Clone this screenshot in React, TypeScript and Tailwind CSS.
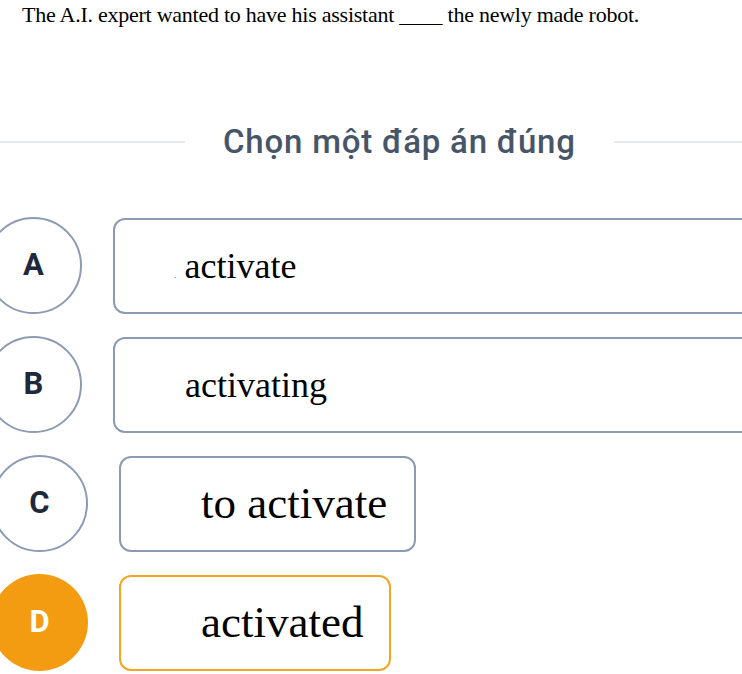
import React from "react";

type Opt = {
  key: string;
  text: string;
  selected?: boolean;
  shift: string;
  boxW: string;
  textCls: string;
  dot?: boolean;
};

const options: Opt[] = [
  { key: "A", text: "activate", shift: "ml-[-15px]", boxW: "w-[660px]", textCls: "pl-[73px] text-[36px]", dot: true },
  { key: "B", text: "activating", shift: "ml-[-15px]", boxW: "w-[660px]", textCls: "pl-[70px] text-[36px]" },
  { key: "C", text: "to activate", shift: "ml-[-9px]", boxW: "w-[297px]", textCls: "pl-[80px] text-[45px]" },
  { key: "D", text: "activated", selected: true, shift: "ml-[-9px]", boxW: "w-[272px]", textCls: "pl-[80px] text-[45px]" },
];

export default function App() {
  return (
    <div className="w-[742px] h-[674px] overflow-hidden bg-white">
      {/* câu hỏi */}
      <p className="pl-[22px] pt-[1px] text-[22px] leading-[28px] text-black font-['Liberation_Serif',serif] tracking-[-0.25px]">
        The A.I. expert wanted to have his assistant ____ the newly made robot.
      </p>

      {/* tiêu đề */}
      <div className="mt-[93px] flex items-center">
        <div className="w-[185px] h-[2px] bg-[#e6eaf0]" />
        <h2 className="px-[38px] text-[33px] leading-[40px] tracking-[0.8px] font-medium text-[#475569] font-['Roboto',sans-serif]">
          Chọn một đáp án đúng
        </h2>
        <div className="flex-1 h-[2px] bg-[#e6eaf0]" />
      </div>

      {/* đáp án */}
      <div className="mt-[55px] flex flex-col gap-[22px]">
        {options.map((o) => (
          <div key={o.key} className={`flex items-center gap-[31px] ${o.shift}`}>
            <div
              className={
                o.selected
                  ? "shrink-0 w-[97px] h-[97px] rounded-full bg-[#f39c12] flex items-center justify-center text-white text-[31px] font-bold font-['Roboto',sans-serif]"
                  : "shrink-0 w-[97px] h-[97px] rounded-full border-2 border-[#8c9bb3] flex items-center justify-center text-[#1e293b] text-[31px] font-bold font-['Roboto',sans-serif]"
              }
            >
              {o.key}
            </div>
            <div
              className={`shrink-0 h-[96px] rounded-[12px] border-2 flex items-center ${o.boxW} ${
                o.selected ? "border-[#f5a524]" : "border-[#8c9bb3]"
              }`}
            >
              <span className={`text-black font-['Liberation_Serif',serif] leading-none ${o.textCls}`}>
                {o.dot && <span className="text-[#5b8bd0] text-[10px] mr-[8px] ml-[-14px]">.</span>}
                {o.text}
              </span>
            </div>
          </div>
        ))}
      </div>
    </div>
  );
}
